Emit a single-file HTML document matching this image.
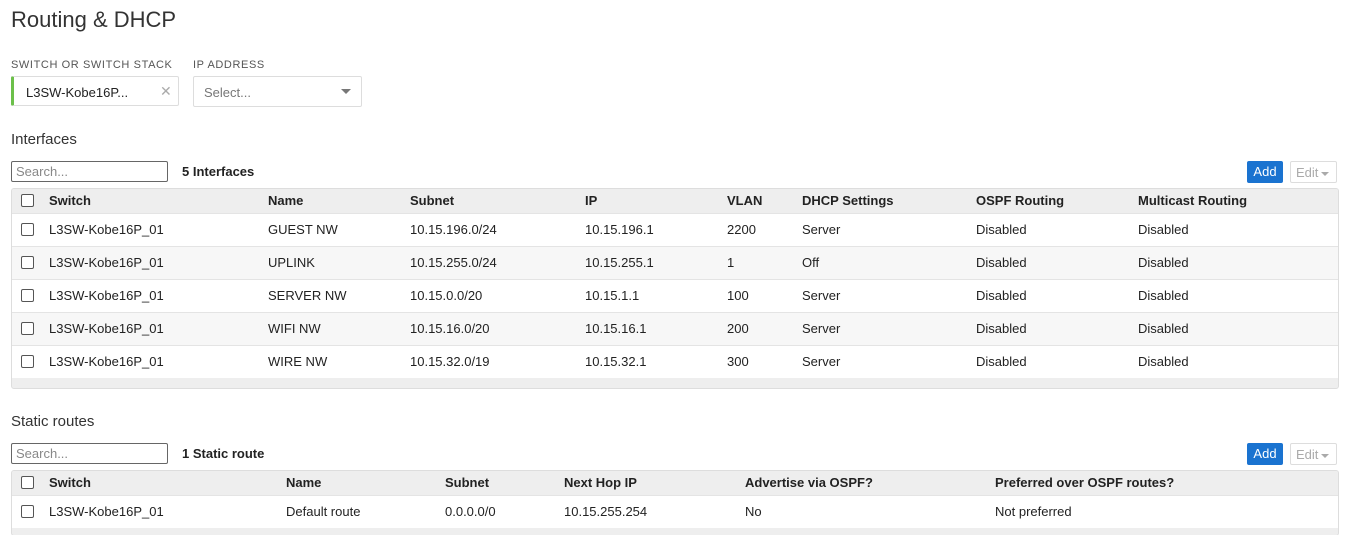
<!DOCTYPE html><html style="overflow:hidden;height:535px"><head><style>
body{margin:0;width:1356px;height:535px;overflow:hidden;background:#fff;font-family:"Liberation Sans",sans-serif;color:#222;font-size:13px;position:relative}
.a{position:absolute;white-space:nowrap}
.lbl{font-size:11px;color:#555;letter-spacing:.6px}
.srch{position:absolute;width:151px;height:19px;border:1px solid #666;border-radius:2px;color:#888;font-size:13px;line-height:19px;padding-left:4px}
.tbl{position:absolute;left:11px;width:1326px;border:1px solid #ddd;border-radius:3px;background:#eee;overflow:hidden}
.row{position:relative;height:33px;background:#fff;border-top:1px solid #e4e4e4;box-sizing:border-box}
.row.alt{background:#f7f7f7}
.hd{position:relative;height:24px;background:#eee;font-weight:bold}
.row span,.hd span{position:absolute;top:50%;transform:translateY(-55%)}
.cb{position:absolute;left:9px;top:50%;margin-top:-7px;width:11px;height:11px;border:1px solid #555;border-radius:2px;background:#fff}
.btn{position:absolute;width:36px;height:22px;background:#1a73d0;color:#fff;border-radius:2px;text-align:center;line-height:22px}
.ed{position:absolute;width:47px;height:22px;border:1px solid #ddd;border-radius:2px;color:#aaa;line-height:22px;box-sizing:border-box;padding-left:5px}
.ed:after{content:"";position:absolute;right:7px;top:10px;border:4px solid transparent;border-top-color:#aaa;border-bottom:0}
</style></head><body>
<div class="a" style="left:11px;top:7px;font-size:22px;color:#333">Routing &amp; DHCP</div>
<div class="a lbl" style="left:11px;top:59px">SWITCH OR SWITCH STACK</div>
<div class="a lbl" style="left:193px;top:59px">IP ADDRESS</div>
<div class="a" style="left:11px;top:76px;width:168px;height:30px;border:1px solid #ddd;border-left:3px solid #6cc04a;box-sizing:border-box;border-radius:2px"><span class="a" style="left:12px;top:8px">L3SW-Kobe16P...</span><span class="a" style="left:146px;top:6px;color:#aaa;font-size:14px">✕</span></div>
<div class="a" style="left:193px;top:76px;width:169px;height:31px;border:1px solid #ddd;box-sizing:border-box;border-radius:2px"><span class="a" style="left:10px;top:8px;color:#777">Select...</span><span class="a" style="right:10px;top:12px;border:5px solid transparent;border-top-color:#777;border-bottom:0;width:0;height:0"></span></div>
<div class="a" style="left:11px;top:131px;font-size:15px;color:#333">Interfaces</div>
<div class="srch" style="left:11px;top:161px">Search...</div>
<div class="a" style="left:182px;top:164px;font-weight:bold">5 Interfaces</div>
<div class="btn" style="left:1247px;top:161px">Add</div><div class="ed" style="left:1290px;top:161px">Edit</div>
<div class="tbl" style="top:188px;height:199px">
<div class="hd"><div class="cb"></div><span style="left:37px">Switch</span><span style="left:256px">Name</span><span style="left:398px">Subnet</span><span style="left:573px">IP</span><span style="left:715px">VLAN</span><span style="left:790px">DHCP Settings</span><span style="left:964px">OSPF Routing</span><span style="left:1126px">Multicast Routing</span></div>
<div class="row"><div class="cb"></div><span style="left:37px">L3SW-Kobe16P_01</span><span style="left:256px">GUEST NW</span><span style="left:398px">10.15.196.0/24</span><span style="left:573px">10.15.196.1</span><span style="left:715px">2200</span><span style="left:790px">Server</span><span style="left:964px">Disabled</span><span style="left:1126px">Disabled</span></div>
<div class="row alt"><div class="cb"></div><span style="left:37px">L3SW-Kobe16P_01</span><span style="left:256px">UPLINK</span><span style="left:398px">10.15.255.0/24</span><span style="left:573px">10.15.255.1</span><span style="left:715px">1</span><span style="left:790px">Off</span><span style="left:964px">Disabled</span><span style="left:1126px">Disabled</span></div>
<div class="row"><div class="cb"></div><span style="left:37px">L3SW-Kobe16P_01</span><span style="left:256px">SERVER NW</span><span style="left:398px">10.15.0.0/20</span><span style="left:573px">10.15.1.1</span><span style="left:715px">100</span><span style="left:790px">Server</span><span style="left:964px">Disabled</span><span style="left:1126px">Disabled</span></div>
<div class="row alt"><div class="cb"></div><span style="left:37px">L3SW-Kobe16P_01</span><span style="left:256px">WIFI NW</span><span style="left:398px">10.15.16.0/20</span><span style="left:573px">10.15.16.1</span><span style="left:715px">200</span><span style="left:790px">Server</span><span style="left:964px">Disabled</span><span style="left:1126px">Disabled</span></div>
<div class="row"><div class="cb"></div><span style="left:37px">L3SW-Kobe16P_01</span><span style="left:256px">WIRE NW</span><span style="left:398px">10.15.32.0/19</span><span style="left:573px">10.15.32.1</span><span style="left:715px">300</span><span style="left:790px">Server</span><span style="left:964px">Disabled</span><span style="left:1126px">Disabled</span></div>
</div>
<div class="a" style="left:11px;top:413px;font-size:15px;color:#333">Static routes</div>
<div class="srch" style="left:11px;top:443px">Search...</div>
<div class="a" style="left:182px;top:446px;font-weight:bold">1 Static route</div>
<div class="btn" style="left:1247px;top:443px">Add</div><div class="ed" style="left:1290px;top:443px">Edit</div>
<div class="tbl" style="top:470px;height:64px">
<div class="hd"><div class="cb"></div><span style="left:37px">Switch</span><span style="left:274px">Name</span><span style="left:433px">Subnet</span><span style="left:552px">Next Hop IP</span><span style="left:733px">Advertise via OSPF?</span><span style="left:983px">Preferred over OSPF routes?</span></div>
<div class="row"><div class="cb"></div><span style="left:37px">L3SW-Kobe16P_01</span><span style="left:274px">Default route</span><span style="left:433px">0.0.0.0/0</span><span style="left:552px">10.15.255.254</span><span style="left:733px">No</span><span style="left:983px">Not preferred</span></div>
</div>
</body></html>
